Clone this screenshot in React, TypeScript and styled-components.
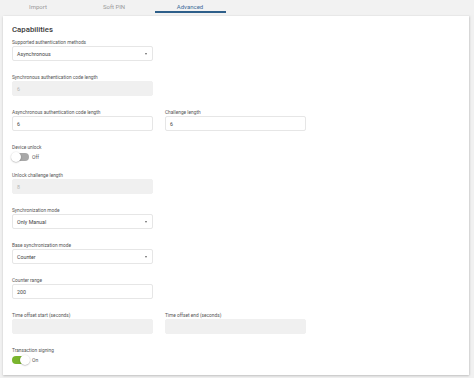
import React from "react";
import styled, { createGlobalStyle } from "styled-components";

const Global = createGlobalStyle`
  html, body { margin: 0; padding: 0; background: #f1f1f1; }
  body { font-family: Roboto, "Liberation Sans", Arial, sans-serif; width: 474px; height: 378px; overflow: hidden; }
`;

const Page = styled.div`
  display: flex;
  flex-direction: column;
  width: 474px;
`;

const TabBar = styled.div`
  display: flex;
  height: 15px;
  background: #f2f2f2;
`;

const Tab = styled.div<{ $active?: boolean }>`
  position: relative;
  width: 76px;
  display: flex;
  align-items: center;
  justify-content: center;
  font-size: 6px;
  padding-bottom: 3px;
  box-sizing: border-box;
  color: ${(p) => (p.$active ? "#3d6e9a" : "#9a9a9a")};
  &::after {
    content: "";
    display: ${(p) => (p.$active ? "block" : "none")};
    position: absolute;
    left: 3px;
    right: 2px;
    bottom: 2px;
    height: 2px;
    background: #2e5f8a;
  }
`;

const Card = styled.div`
  margin: 1px 5px 0 3px;
  background: #fff;
  box-shadow: 0 1px 2px rgba(0, 0, 0, 0.18), 1px 0 2px rgba(0, 0, 0, 0.08);
  padding: 8px 9px 10px 9px;
  display: flex;
  flex-direction: column;
`;

const Heading = styled.div`
  font-size: 7.8px;
  font-weight: 500;
  color: #3a3a3a;
  line-height: 11px;
  margin-bottom: 4px;
`;

const Row = styled.div`
  display: flex;
  gap: 12px;
`;

const Field = styled.div<{ $compact?: boolean; $last?: boolean }>`
  display: flex;
  flex-direction: column;
  width: 141px;
  margin-bottom: ${(p) => (p.$last ? "0" : p.$compact ? "10px" : "13px")};
`;

const Label = styled.div`
  font-size: 4.8px;
  line-height: 7px;
  color: #555;
  white-space: nowrap;
`;

const Input = styled.div<{ $disabled?: boolean }>`
  height: 15px;
  box-sizing: border-box;
  border-radius: 2px;
  border: 1px solid ${(p) => (p.$disabled ? "#f0f0f0" : "#e6e6e6")};
  background: ${(p) => (p.$disabled ? "#f0f0f0" : "#fff")};
  display: flex;
  align-items: center;
  justify-content: space-between;
  padding: 0 5px 0 4px;
  font-size: 5.3px;
  color: ${(p) => (p.$disabled ? "#b5b5b5" : "#444")};
`;

const Caret = styled.span`
  width: 0;
  height: 0;
  border-left: 1.6px solid transparent;
  border-right: 1.6px solid transparent;
  border-top: 2.2px solid #666;
`;

const ToggleRow = styled.div`
  display: flex;
  align-items: center;
  gap: 3px;
  height: 10px;
  margin-top: 1px;
`;

const Track = styled.div<{ $on?: boolean }>`
  position: relative;
  width: 17px;
  height: 8px;
  border-radius: 4px;
  background: ${(p) => (p.$on ? "#7ab52e" : "#a8a8a8")};
`;

const Knob = styled.div<{ $on?: boolean }>`
  position: absolute;
  top: -1px;
  left: ${(p) => (p.$on ? "8px" : "-1px")};
  width: 10px;
  height: 10px;
  border-radius: 50%;
  background: #fff;
  box-shadow: 0 0.5px 1.5px rgba(0, 0, 0, 0.35);
`;

const ToggleText = styled.span`
  font-size: 5px;
  color: #555;
`;

const TextField = ({ label, value = "", disabled }: { label: string; value?: string; disabled?: boolean }) => (
  <Field>
    <Label>{label}</Label>
    <Input $disabled={disabled}>{value}</Input>
  </Field>
);

const SelectField = ({ label, value }: { label: string; value: string }) => (
  <Field>
    <Label>{label}</Label>
    <Input>
      <span>{value}</span>
      <Caret />
    </Input>
  </Field>
);

const Toggle = ({ label, on, last }: { label: string; on?: boolean; last?: boolean }) => (
  <Field $compact $last={last}>
    <Label>{label}</Label>
    <ToggleRow>
      <Track $on={on}>
        <Knob $on={on} />
      </Track>
      <ToggleText>{on ? "On" : "Off"}</ToggleText>
    </ToggleRow>
  </Field>
);

export default function App() {
  return (
    <Page>
      <Global />
      <TabBar>
        <Tab>Import</Tab>
        <Tab>Soft PIN</Tab>
        <Tab $active>Advanced</Tab>
      </TabBar>
      <Card>
        <Heading>Capabilities</Heading>
        <SelectField label="Supported authentication methods" value="Asynchronous" />
        <TextField label="Synchronous authentication code length" value="6" disabled />
        <Row>
          <TextField label="Asynchronous authentication code length" value="6" />
          <TextField label="Challenge length" value="6" />
        </Row>
        <Toggle label="Device unlock" />
        <TextField label="Unlock challenge length" value="8" disabled />
        <SelectField label="Synchronization mode" value="Only Manual" />
        <SelectField label="Base synchronization mode" value="Counter" />
        <TextField label="Counter range" value="200" />
        <Row>
          <TextField label="Time offset start (seconds)" disabled />
          <TextField label="Time offset end (seconds)" disabled />
        </Row>
        <Toggle label="Transaction signing" on last />
      </Card>
    </Page>
  );
}
